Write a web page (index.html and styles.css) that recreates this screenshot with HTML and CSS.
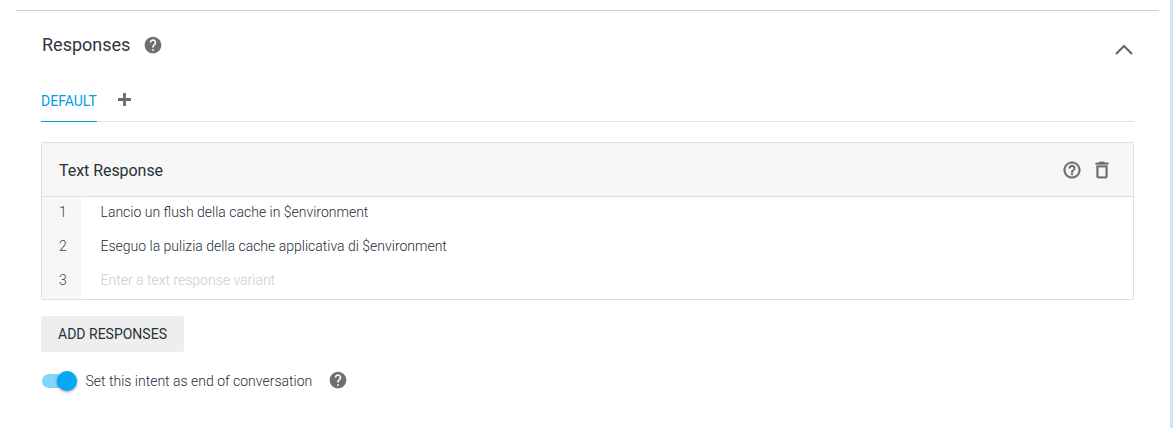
FILE: index.html
```html
<!DOCTYPE html>
<html lang="en">
<head>
  <meta charset="UTF-8" />
  <title>Responses</title>
  <link rel="stylesheet" href="styles.css">
</head>
<body>
  <div class="page">
    <section class="panel">
      <div class="panel-head">
        <div class="panel-title">
          <h2>Responses</h2>
          <svg class="help" viewBox="0 0 24 24"><path d="M12 2C6.48 2 2 6.48 2 12s4.48 10 10 10 10-4.48 10-10S17.52 2 12 2zm1 17h-2v-2h2v2zm2.07-7.75l-.9.92C13.45 12.9 13 13.5 13 15h-2v-.5c0-1.1.45-2.1 1.17-2.83l1.24-1.26c.37-.36.59-.86.59-1.41 0-1.1-.9-2-2-2s-2 .9-2 2H8c0-2.21 1.79-4 4-4s4 1.79 4 4c0 .88-.36 1.68-.93 2.25z"/></svg>
        </div>
        <svg class="chevron" viewBox="0 0 18 11"><path d="M1 10l8-8 8 8"/></svg>
      </div>

      <div class="tabs">
        <div class="tab active">DEFAULT</div>
        <svg class="plus" viewBox="0 0 14 14"><path d="M5.5 0h3v5.5H14v3H8.500V14h-3V8.500H0v-3h5.500z"/></svg>
      </div>

      <div class="card">
        <div class="card-head">
          <span>Text Response</span>
          <div class="card-icons">
            <svg class="icon" viewBox="0 0 24 24"><path d="M11 18h2v-2h-2v2zm1-16C6.48 2 2 6.48 2 12s4.48 10 10 10 10-4.48 10-10S17.52 2 12 2zm0 18c-4.41 0-8-3.59-8-8s3.59-8 8-8 8 3.59 8 8-3.59 8-8 8zm0-14c-2.21 0-4 1.79-4 4h2c0-1.1.9-2 2-2s2 .9 2 2c0 2-3 1.75-3 5h2c0-2.25 3-2.5 3-5 0-2.21-1.790-4-4-4z"/></svg>
            <svg class="icon trash" viewBox="0 0 24 24"><path d="M6 19c0 1.1.9 2 2 2h8c1.1 0 2-.9 2-2V7H6v12zM8 9h8v10H8V9zm7.500-5l-1-1h-5l-1 1H5v2h14V4z"/></svg>
          </div>
        </div>
        <div class="row"><div class="num">1</div><div class="text">Lancio un flush della cache in $environment</div></div>
        <div class="row"><div class="num">2</div><div class="text">Eseguo la pulizia della cache applicativa di $environment</div></div>
        <div class="row"><div class="num">3</div><div class="text placeholder">Enter a text response variant</div></div>
      </div>

      <button class="add-btn">ADD RESPONSES</button>

      <div class="end-row">
        <div class="toggle"><div class="knob"></div></div>
        <span class="end-label">Set this intent as end of conversation</span>
        <svg class="help small" viewBox="0 0 24 24"><path d="M12 2C6.48 2 2 6.48 2 12s4.48 10 10 10 10-4.48 10-10S17.52 2 12 2zm1 17h-2v-2h2v2zm2.07-7.75l-.9.92C13.45 12.9 13 13.5 13 15h-2v-.5c0-1.1.45-2.1 1.17-2.83l1.24-1.26c.37-.36.59-.86.59-1.41 0-1.1-.9-2-2-2s-2 .9-2 2H8c0-2.21 1.79-4 4-4s4 1.79 4 4c0 .88-.36 1.68-.93 2.25z"/></svg>
      </div>
    </section>
  </div>
  <div class="scroll-edge"></div>
</body>
</html>
```

FILE: styles.css
```css
* {
  box-sizing: border-box;
  font-family: Roboto, sans-serif;
}
html, body {
  height: 100%;
}
body {
  margin: 0;
  background: #fff;
  display: flex;
  overflow: hidden;
}
.page {
  flex: 1;
  padding: 10px 11px 0 16px;
}
.scroll-edge {
  width: 3px;
  background: #d0e2f7;
}
.panel {
  border-top: 1px solid #d2cece;
  padding: 0 25px;
}
.panel-head {
  display: flex;
  justify-content: space-between;
  align-items: center;
  height: 68px;
}
.panel-title {
  display: flex;
  align-items: center;
  margin-top: -1px;
  padding-left: 1px;
}
h2 {
  margin: 0;
  font-size: 18px;
  font-weight: 400;
  color: #2f3542;
}
.help {
  width: 20px;
  height: 20px;
  margin-left: 13px;
  fill: #6f6f6f;
}
.chevron {
  width: 18px;
  height: 11px;
  margin-right: 1px;
  margin-top: 8px;
  fill: none;
  stroke: #636870;
  stroke-width: 2.2;
}
.tabs {
  display: flex;
  align-items: center;
  height: 43px;
  border-bottom: 1px solid #e0e0e0;
}
.tab {
  font-size: 14px;
  height: 43px;
  line-height: 44px;
  color: #039be5;
  border-bottom: 1px solid #039be5;
  margin-bottom: -1px;
}
.plus {
  width: 13px;
  height: 13px;
  margin-left: 21px;
  margin-top: -1px;
  fill: #6b6b6b;
}
.card {
  margin-top: 20px;
  border: 1px solid #dedede;
  border-radius: 2px;
}
.card-head {
  display: flex;
  justify-content: space-between;
  align-items: center;
  height: 54px;
  padding: 2px 20px 0 17px;
  background: #f7f7f7;
  border-bottom: 1px solid #dedede;
  font-size: 16px;
  color: #263238;
}
.card-head span {
  letter-spacing: -0.05px;
}
.card-icons {
  display: flex;
  gap: 9px;
}
.icon {
  width: 20px;
  height: 20px;
  fill: #6b6b6b;
  stroke: #6b6b6b;
  stroke-width: 0.5;
}
.trash {
  width: 22px;
  height: 22px;
  margin-top: -1px;
  stroke-width: 0.3;
}
.row {
  display: flex;
  height: 34px;
  font-size: 14px;
  font-weight: 300;
  color: #262d38;
}
.num {
  width: 39px;
  padding-left: 17px;
  line-height: 31px;
  background: #f7f7f7;
  color: #37404a;
}
.text {
  padding-left: 19.5px;
  line-height: 31px;
}
.placeholder {
  color: #c9ccd1;
}
.add-btn {
  display: block;
  width: 143px;
  height: 36px;
  margin-top: 16px;
  border: none;
  border-radius: 2px;
  background: #eeeeee;
  font-size: 14px;
  color: #263238;
}
.end-row {
  display: flex;
  align-items: center;
  margin-top: 15px;
  height: 28px;
}
.toggle {
  position: relative;
  width: 34px;
  height: 14px;
  margin-left: 1px;
  border-radius: 7px;
  background: #81d4fa;
}
.knob {
  position: absolute;
  top: -3px;
  right: -1px;
  width: 20px;
  height: 20px;
  border-radius: 50%;
  background: #03a9f4;
  box-shadow: 0 1px 3px rgba(0, 0, 0, 0.4);
}
.end-label {
  margin-left: 9.5px;
  font-size: 14px;
  font-weight: 300;
  color: #262d38;
}
.help.small {
  width: 20px;
  height: 20px;
  margin-left: 15.5px;
  margin-top: -2px;
}
```
